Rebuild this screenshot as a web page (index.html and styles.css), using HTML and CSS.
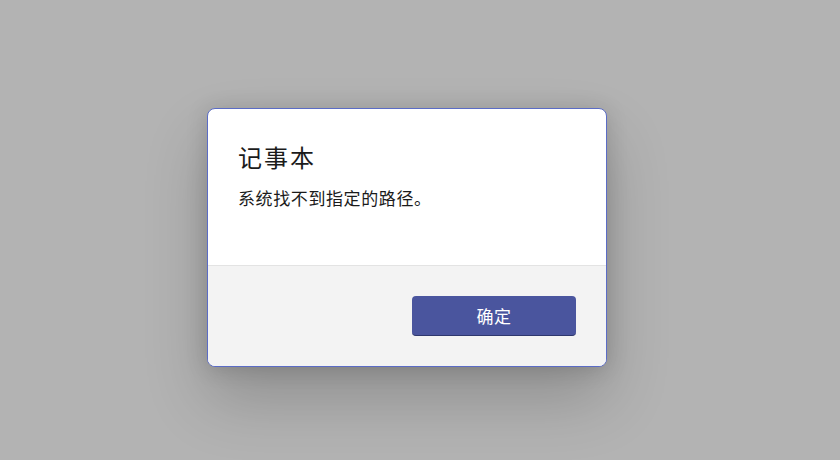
FILE: index.html
```html
<!DOCTYPE html>
<html lang="zh-CN">
<head>
<meta charset="utf-8">
<title>记事本</title>
<link rel="stylesheet" href="styles.css">
</head>
<body>
<div class="backdrop">
  <div class="dialog" role="dialog">
    <div class="dialog-content">
      <div class="dialog-title">记事本</div>
      <div class="dialog-message">系统找不到指定的路径。</div>
    </div>
    <div class="dialog-footer">
      <button class="btn-primary">确定</button>
    </div>
  </div>
</div>
</body>
</html>
```
FILE: styles.css
```css
html, body {
  margin: 0;
  padding: 0;
  width: 840px;
  height: 460px;
  overflow: hidden;
  background: #b3b3b3;
  font-family: "Noto Sans CJK SC", "Noto Sans", sans-serif;
}
.backdrop {
  padding: 108px 0 0 207px;
}
.dialog {
  width: 398px;
  height: 257px;
  background: #ffffff;
  border: 1px solid #5b6cc6;
  border-radius: 8px;
  overflow: hidden;
  display: flex;
  flex-direction: column;
  box-shadow: 0 32px 64px rgba(0,0,0,0.2), 0 2px 21px rgba(0,0,0,0.15);
}
.dialog-content {
  height: 157px;
  flex: none;
  padding: 33px 30px 0 30px;
  box-sizing: border-box;
  border-bottom: 1px solid #e3e3e3;
}
.dialog-title {
  font-size: 24px;
  line-height: 30px;
  letter-spacing: 2px;
  color: #1b1b1b;
  font-weight: 400;
}
.dialog-message {
  margin-top: 15px;
  font-size: 17px;
  line-height: 22px;
  letter-spacing: 0.6px;
  color: #1b1b1b;
}
.dialog-footer {
  flex: 1;
  background: #f3f3f3;
  display: flex;
  justify-content: flex-end;
  align-items: flex-start;
  padding: 30px 30px 0 0;
}
.btn-primary {
  width: 164px;
  height: 40px;
  border: none;
  border-bottom: 1px solid #2e376d;
  border-radius: 4px;
  background: #4a559e;
  color: #ffffff;
  font-family: "Noto Sans CJK SC", "Noto Sans", sans-serif;
  font-size: 17px;
  letter-spacing: 0.5px;
  padding: 0;
}
```
